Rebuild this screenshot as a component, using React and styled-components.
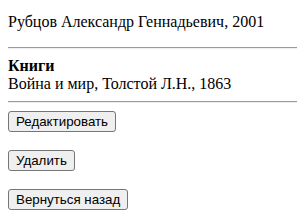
import React from "react";
import styled, { createGlobalStyle } from "styled-components";

const Global = createGlobalStyle`
  html, body { margin: 0; padding: 0; background: #ffffff; }
  body { font-family: "Liberation Serif", "Times New Roman", serif; font-size: 16px; color: #000; }
`;

const Page = styled.div`
  padding: 8px 0 8px 8px;
`;

const Title = styled.p`
  margin: 5px 0 16px;
  line-height: 18px;
`;

const Rule = styled.hr`
  margin: 8px 0;
  height: 0;
  border: none;
  border-top: 1px solid #9a9a9a;
  border-bottom: 1px solid #eeeeee;
`;

const Section = styled.div`
  line-height: 18px;
`;

const Heading = styled.div`
  font-weight: bold;
`;

const Line = styled.div``;

const Actions = styled.div`
  display: flex;
  flex-direction: column;
  align-items: flex-start;
  gap: 18px;
`;

const Button = styled.button`
  font-family: "Liberation Sans", Arial, sans-serif;
  font-size: 13.333px;
  line-height: 15px;
  color: #000;
  background: #efefef;
  border: 1px solid #767676;
  border-radius: 3px;
  padding: 2px 7px;
  margin: 0;
  cursor: default;
`;

export default function App() {
  return (
    <>
      <Global />
      <Page>
        <Title>Рубцов Александр Геннадьевич, 2001</Title>
        <Rule />
        <Section>
          <Heading>Книги</Heading>
          <Line>Война и мир, Толстой Л.Н., 1863</Line>
        </Section>
        <Rule />
        <Actions>
          <Button>Редактировать</Button>
          <Button>Удалить</Button>
          <Button>Вернуться назад</Button>
        </Actions>
      </Page>
    </>
  );
}
